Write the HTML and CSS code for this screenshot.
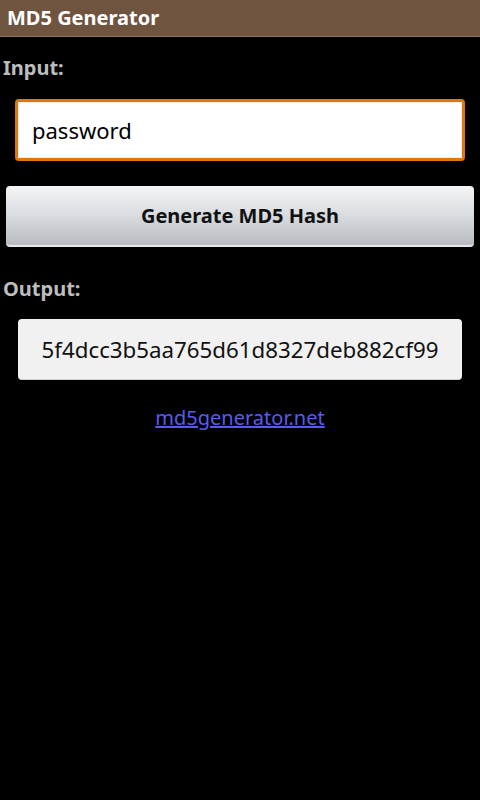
FILE: index.html
```html
<!DOCTYPE html>
<html>
<head>
<meta charset="utf-8">
<link rel="stylesheet" href="styles.css">
</head>
<body>
<div class="titlebar">MD5 Generator</div>
<main class="content">
  <div class="label label-input">Input:</div>
  <div class="field"><div class="field-inner">password</div></div>
  <div class="button">Generate MD5 Hash</div>
  <div class="label label-output">Output:</div>
  <div class="output">5f4dcc3b5aa765d61d8327deb882cf99</div>
  <div class="linkrow"><a class="link" href="#">md5generator.net</a></div>
</main>
</body>
</html>
```
FILE: styles.css
```css
html, body {
  margin: 0;
  padding: 0;
  background: #000;
  width: 480px;
  height: 800px;
  font-family: "Noto Sans", "Open Sans", "DejaVu Sans", sans-serif;
}
.titlebar {
  height: 36px;
  line-height: 36px;
  background: #6f543f;
  border-bottom: 1px solid #8a7562;
  color: #fff;
  font-weight: bold;
  font-size: 20px;
  padding-left: 7px;
}
.content {
  display: flex;
  flex-direction: column;
}
.label {
  color: #bdbdbd;
  font-weight: bold;
  font-size: 20px;
  line-height: 28px;
  padding-left: 3px;
}
.label-input { margin-top: 17px; }
.label-output { margin-top: 28px; }
.field {
  margin: 17px 15px 0 15px;
  height: 62px;
  box-sizing: border-box;
  border: 3px solid #e07812;
  border-radius: 4px;
  background: #fff;
  display: flex;
}
.field-inner {
  flex: 1;
  border: 1px solid #f3eadf;
  display: flex;
  align-items: center;
  padding-left: 13px;
  font-size: 22px;
  color: #000;
}
.button {
  margin: 25px 6px 0 6px;
  height: 61px;
  box-sizing: border-box;
  border-radius: 4px;
  background: linear-gradient(to bottom, #f4f5f6 0%, #dcdfe2 45%, #b8bcc1 100%);
  border-bottom: 2px solid #e6e8ea;
  display: flex;
  align-items: center;
  justify-content: center;
  font-weight: bold;
  font-size: 20px;
  color: #111;
}
.output {
  margin: 16px 18px 0 18px;
  height: 61px;
  box-sizing: border-box;
  border-radius: 4px;
  background: #f1f1f1;
  border-bottom: 1px solid #d0d0d0;
  display: flex;
  align-items: center;
  justify-content: center;
  font-size: 22.3px;
  color: #111;
}
.linkrow {
  margin-top: 24px;
  text-align: center;
  line-height: 28px;
}
.link {
  color: #5a5af0;
  font-size: 20px;
  text-decoration: underline;
}
```
